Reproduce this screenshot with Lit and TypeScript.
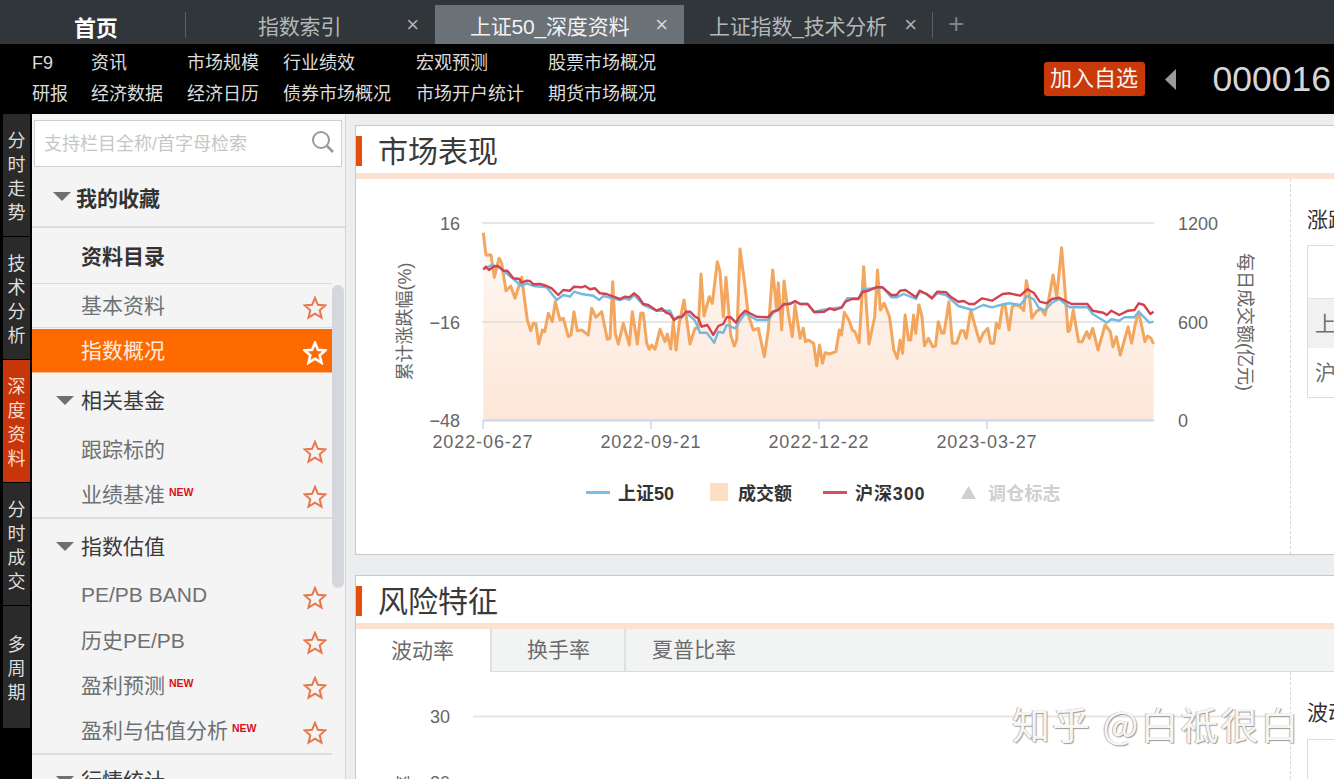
import { LitElement, html, css, svg } from "lit";
import { customElement } from "lit/decorators.js";

// points traced from the crops: [x, y] in crop pixels
const A_X = (x: number) => 380 + x / 3;
const B_X = (x: number) => 780 + x / 2.83;
const Y = (y: number) => 200 + y / 3;

const join = (a: number[][], b: number[][]) => [
  ...a.map(([x, y]) => [A_X(x), Y(y)]),
  ...b.map(([x, y]) => [B_X(x), Y(y)]),
];

const volume = join(
  [[310,98],[318,165],[333,165],[343,232],[357,175],[365,190],[378,272],[392,258],[405,295],[425,232],[442,360],[452,392],[460,370],[468,372],[476,432],[487,390],[494,395],[505,340],[517,365],[526,305],[540,360],[550,355],[565,410],[573,405],[582,335],[592,392],[605,390],[625,405],[635,325],[648,352],[665,335],[682,418],[690,415],[698,245],[706,400],[715,432],[730,370],[748,435],[757,335],[772,432],[782,340],[790,340],[800,430],[808,448],[815,435],[825,448],[840,388],[855,425],[862,402],[872,447],[880,365],[888,450],[898,370],[912,300],[930,432],[945,385],[955,385],[963,222],[972,348],[988,290],[997,310],[1012,185],[1020,215],[1030,350],[1038,232],[1052,405],[1063,438],[1070,420],[1080,147],[1092,235],[1105,345],[1120,390],[1135,385],[1153,470],[1165,390],[1178,210],[1190,330],[1195,248],[1205,390],[1212,243],[1225,340],[1237,410],[1245,315]],
  [[57,415],[66,385],[72,425],[80,420],[95,430],[104,497],[112,435],[120,490],[128,458],[140,462],[158,455],[168,390],[174,405],[182,337],[195,360],[205,390],[212,395],[224,428],[237,200],[252,432],[268,350],[276,210],[284,330],[295,310],[310,350],[322,450],[332,475],[340,420],[347,460],[354,345],[364,420],[370,420],[378,345],[384,400],[393,315],[402,350],[409,437],[420,415],[432,440],[440,438],[448,365],[458,400],[464,400],[478,305],[488,430],[500,430],[512,392],[520,392],[527,415],[540,330],[550,370],[565,425],[575,400],[588,385],[596,430],[605,430],[612,370],[620,385],[630,315],[637,315],[648,390],[657,320],[668,315],[678,318],[690,332],[697,242],[705,280],[713,355],[725,335],[738,325],[750,345],[760,300],[773,225],[783,290],[797,143],[808,290],[815,395],[820,390],[830,330],[845,425],[855,425],[868,395],[875,415],[885,385],[900,450],[920,375],[935,395],[942,440],[952,410],[963,465],[985,380],[995,430],[1005,375],[1015,335],[1033,425],[1040,408],[1050,415],[1057,432]],
);

const hs300 = join(
  [[310,208],[318,200],[327,210],[340,200],[355,198],[370,212],[382,212],[400,235],[418,237],[425,248],[440,242],[450,243],[460,253],[480,252],[500,258],[515,265],[535,285],[550,270],[570,272],[582,260],[605,262],[615,258],[630,268],[645,265],[660,280],[680,282],[700,290],[720,297],[735,290],[748,292],[762,280],[775,290],[790,312],[805,315],[830,332],[845,325],[858,338],[870,342],[882,360],[895,350],[905,352],[918,335],[930,335],[945,350],[955,355],[965,380],[982,375],[1000,405],[1015,378],[1030,372],[1040,352],[1052,352],[1068,368],[1080,348],[1095,332],[1130,350],[1165,352],[1178,335],[1195,330],[1212,312],[1230,312],[1245,303]],
  [[57,312],[78,312],[97,337],[125,335],[140,325],[155,330],[175,322],[185,305],[205,297],[222,297],[235,275],[250,272],[272,262],[290,262],[315,285],[330,285],[340,272],[355,270],[385,292],[395,272],[415,282],[430,295],[445,275],[470,277],[485,292],[505,305],[520,303],[535,312],[550,312],[572,295],[600,302],[630,282],[650,280],[680,287],[700,268],[718,278],[735,305],[755,310],[770,297],[790,293],[825,312],[870,312],[885,332],[915,338],[925,345],[938,332],[960,345],[985,332],[1003,330],[1015,310],[1030,315],[1048,342],[1057,335]],
);

const sz50 = join(
  [[310,208],[335,195],[355,200],[370,212],[400,237],[425,258],[440,250],[460,258],[500,262],[530,300],[550,285],[570,290],[582,275],[605,282],[640,287],[658,300],[670,288],[720,300],[735,295],[748,300],[762,285],[790,315],[830,332],[870,332],[882,358],[905,350],[918,337],[945,362],[960,398],[980,398],[1003,428],[1015,395],[1030,398],[1040,375],[1065,385],[1095,340],[1130,360],[1165,360],[1178,340],[1212,315],[1245,306]],
  [[57,312],[78,312],[97,335],[120,330],[175,322],[190,295],[222,295],[235,268],[270,265],[290,262],[315,292],[330,292],[350,282],[385,297],[395,275],[415,282],[430,295],[445,280],[470,285],[505,318],[545,330],[575,315],[600,322],[630,313],[650,310],[680,315],[700,288],[718,298],[735,328],[750,330],[770,308],[790,297],[820,322],[870,322],[885,342],[925,368],[938,358],[960,362],[975,352],[1003,352],[1015,335],[1045,368],[1057,365]],
);

const line = (pts: number[][]) => pts.map(([x, y]) => `${x.toFixed(1)},${y.toFixed(1)}`).join(" ");
const area = (pts: number[][]) => `${pts[0][0].toFixed(1)},420 ${line(pts)} ${pts[pts.length - 1][0].toFixed(1)},420`;

const star = html`<svg class="star" viewBox="0 0 24 24"><polygon points="12,1.8 14.9,8.8 22.4,9.4 16.7,14.3 18.5,21.7 12,17.7 5.5,21.7 7.3,14.3 1.6,9.4 9.1,8.8"></polygon></svg>`;
const caret = html`<svg class="caret" viewBox="0 0 18 9"><polygon points="0,0 18,0 9,9"></polygon></svg>`;

const railItems = ["分时走势", "技术分析", "深度资料", "分时成交", "多周期"];

const navCols = [
  ["F9", "研报"],
  ["资讯", "经济数据"],
  ["市场规模", "经济日历"],
  ["行业绩效", "债券市场概况"],
  ["宏观预测", "市场开户统计"],
  ["股票市场概况", "期货市场概况"],
];

class AppParts {
  static row(label: string, isNew = false, cls = "") {
    return html`<div class="row ${cls}">
      <span>${label}</span>${isNew ? html`<b class="new">NEW</b>` : ""}${star}
    </div>`;
  }
}

@customElement("app-root")
export class AppRoot extends LitElement {
  static styles = css`
    :host {
      display: block;
      position: relative;
      width: 1334px;
      height: 779px;
      overflow: hidden;
      background: #ecedee;
      font-family: "Liberation Sans", "Noto Sans CJK SC", sans-serif;
      color: #333;
    }
    .tabs {
      display: flex;
      height: 44px;
      background: #31363a;
      color: #b4b6b7;
      font-size: 21px;
      letter-spacing: -0.2px;
    }
    .tab {
      display: flex;
      align-items: center;
      box-sizing: border-box;
      height: 39px;
      margin-top: 5px;
      width: 249px;
      padding-right: 16px;
    }
    .tab.home {
      width: 185px;
      padding-left: 74px;
      font-weight: bold;
      font-size: 22px;
      color: #fff;
      padding-top: 3px;
    }
    .tab.index { padding-left: 72px; }
    .tab.on { padding-left: 35px; background: #6a7177; color: #f2f2f2; }
    .tab.tech { padding-left: 25px; width: 248px; padding-right: 15px; }
    .x { margin-left: auto; font-size: 22px; line-height: 1; color: #aeb0b2; }
    .on .x { color: #d5d6d7; }
    .sep { width: 1px; height: 26px; margin-top: 12px; background: #5c6064; }
    .plus { margin: 10px 0 0 15px; font-size: 28px; font-weight: 300; line-height: 1; color: #7f8386; }

    .nav {
      display: flex;
      align-items: flex-start;
      box-sizing: border-box;
      height: 70px;
      background: #000;
      color: #dcdcdc;
      font-size: 18px;
      padding: 4px 3px 0 32px;
    }
    .nav-grid {
      display: grid;
      grid-template-columns: 59px 96px 96px 133px 132px auto;
      grid-auto-rows: 31px;
      line-height: 31px;
    }
    .nav-side {
      margin-left: auto;
      display: flex;
      align-items: center;
      height: 34px;
      margin-top: 14px;
    }
    .add {
      width: 101px;
      height: 34px;
      line-height: 34px;
      text-align: center;
      background: #c9390a;
      border-radius: 3px;
      color: #f5f5f5;
      font-size: 22px;
    }
    .back { margin-left: 20px; width: 11px; height: 21px; display: block; }
    .back polygon { fill: #9a9a9a; }
    .code { margin-left: 37px; font-size: 35.5px; color: #d6d6d6; line-height: 34px; }

    .body { display: flex; height: 665px; overflow: hidden; }
    .rail {
      box-sizing: border-box;
      width: 32px;
      padding: 0 2px 0 3px;
      background: #000;
      display: flex;
      flex-direction: column;
      gap: 1px;
      flex: none;
    }
    .rail-item {
      box-sizing: border-box;
      height: 122px;
      padding-top: 3px;
      background: #2a2a2a;
      color: #dedede;
      font-size: 18px;
      line-height: 24px;
      display: flex;
      align-items: center;
      justify-content: center;
    }
    .rail-item span { width: 18px; text-align: center; }
    .rail-item.on { background: #c7360a; color: #f7dcd0; }

    .side {
      position: relative;
      box-sizing: border-box;
      flex: none;
      width: 314px;
      border-right: 1px solid #d4d4d4;
      background: #f4f4f5;
      padding-top: 6px;
      overflow: hidden;
    }
    .search {
      box-sizing: border-box;
      display: flex;
      align-items: center;
      width: 308px;
      height: 47px;
      margin-left: 2px;
      padding: 0 6px 4px 9px;
      background: #fff;
      border: 1px solid #cfcfcf;
      color: #c6c6c6;
      font-size: 18px;
    }
    .search svg { margin-left: auto; width: 24px; height: 24px; }
    .fav {
      box-sizing: border-box;
      display: flex;
      align-items: center;
      height: 61px;
      padding-left: 21px;
      border-bottom: 2px solid #dcdcdc;
      font-size: 21px;
      font-weight: bold;
    }
    .fav .caret { margin: 0 5px 0 0; }
    .dir {
      box-sizing: border-box;
      display: flex;
      align-items: center;
      height: 56px;
      padding: 0 0 2px 49px;
      margin-right: 13px;
      border-bottom: 1px solid #dcdcdc;
      font-size: 21px;
      font-weight: bold;
    }
    .caret { width: 18px; height: 9px; flex: none; }
    .caret polygon { fill: #6f6f6f; }
    .row {
      box-sizing: border-box;
      display: flex;
      align-items: center;
      height: 45px;
      padding: 0 5px 4px 49px;
      margin-right: 13px;
      color: #6d7172;
      font-size: 21px;
    }
    .row.basic { height: 44px; border-bottom: 1px solid #dcdcdc; margin-bottom: 1px; }
    .row.active {
      height: 44px;
      background: #ff6a00;
      border-bottom: 1px solid #f9b585;
      color: #fbeee2;
      margin-bottom: 5px;
    }
    .row.plain { padding-bottom: 1px; }
    .star { width: 24px; height: 24px; margin: 9px 0 0 auto; flex: none; }
    .plain .star { margin-top: 6px; }
    .star polygon { fill: none; stroke: #e8784a; stroke-width: 2; }
    .active .star polygon { stroke: #fff; stroke-width: 2.6; }
    .new {
      align-self: flex-start;
      margin: 14px 0 0 4px;
      font-size: 10.5px;
      line-height: 12px;
      color: #d8101c;
    }
    .group {
      box-sizing: border-box;
      display: flex;
      align-items: center;
      height: 45px;
      padding: 0 0 4px 24px;
      margin: 0 13px 4px 0;
      color: #3a3a3a;
      font-size: 21px;
    }
    .group .caret { margin: 4px 7px 0 0; }
    .line { height: 2px; background: #dcdcdc; margin: 0 13px 5px 0; }
    .line.thin { margin-top: 0; margin-bottom: 3px; }
    .thumb {
      position: absolute;
      left: 300px;
      top: 171px;
      width: 12px;
      height: 303px;
      border-radius: 6px;
      background: #d6d7dc;
    }

    .main { flex: none; width: 988px; padding: 11px 0 0 9px; }
    .card {
      box-sizing: border-box;
      width: 990px;
      background: #fff;
      border: 1px solid #c9c9c9;
      border-right: none;
    }
    .card.market { height: 430px; margin-bottom: 20px; }
    .head {
      display: flex;
      align-items: center;
      box-sizing: border-box;
      height: 53px;
      padding-top: 3px;
      border-bottom: 6px solid #fde2d2;
      font-size: 30px;
      color: #3a3a3a;
    }
    .head span { margin-bottom: 4px; }
    .mark { width: 6px; height: 30px; margin-right: 16px; background: #e34e0d; }
    .split { display: flex; }
    .plot {
      box-sizing: border-box;
      flex: none;
      width: 935px;
      border-right: 1px dashed #d6d6d6;
    }
    .market .plot { height: 375px; }
    .plot svg { display: block; }
    .plot text { font-family: "Liberation Sans", "Noto Sans CJK SC", sans-serif; font-size: 18px; fill: #666; }
    .legend {
      display: flex;
      align-items: center;
      height: 22px;
      margin-top: 22px;
      padding-left: 230px;
      font-size: 18px;
      font-weight: bold;
      color: #333;
      white-space: nowrap;
    }
    .dash { width: 24px; height: 3px; margin-right: 8px; }
    .dash.blue { background: #7cbce6; }
    .dash.red { background: #d94f5e; margin-left: 31px; }
    .swatch { width: 18px; height: 18px; margin: 0 10px 0 34px; background: #fddfc6; }
    .tri { width: 15px; height: 13px; margin: 0 12px 0 36px; display: block; }
    .tri polygon { fill: #cfcfcf; }
    .w58 { width: 58px; }
    .w54 { width: 54px; }
    .w70 { width: 70px; letter-spacing: 0.9px; }
    .muted { color: #cfcfcf; letter-spacing: 0.2px; }
    .panel { flex: none; width: 300px; padding-left: 16px; font-size: 21px; color: #333; }
    .panel-title { height: 24px; line-height: 24px; margin-top: 29px; margin-bottom: 13px; white-space: nowrap; }
    .risk .panel-title { margin-top: 29px; margin-bottom: 14px; }
    .table { border: 1px solid #dcdcdc; border-right: none; color: #6d7172; }
    .t-head { height: 52px; border-bottom: 1px solid #e2e2e2; }
    .t-row { height: 49px; line-height: 49px; padding-left: 7px; }
    .t-row.odd { background: #f1f1f1; }
    .subtabs {
      display: flex;
      box-sizing: border-box;
      height: 43px;
      background: #f2f3f3;
      border-bottom: 1px solid #dcdcdc;
      font-size: 21px;
      color: #6b6b6b;
    }
    .subtab {
      box-sizing: border-box;
      display: flex;
      align-items: center;
      height: 42px;
      width: 134px;
      padding: 0 0 4px 35px;
      border-right: 2px solid #e0e0e0;
    }
    .subtab.on { width: 136px; height: 43px; background: #fff; }
    .subtab.last { width: auto; padding-left: 26px; border: none; }
    .mark-water {
      position: absolute;
      left: 1012px;
      top: 696px;
      font-family: "Noto Sans CJK SC", sans-serif;
      font-size: 38px;
      letter-spacing: 2px;
      line-height: 54px;
      white-space: nowrap;
      color: #f6f6f6;
      text-shadow: 1px 1px 1px #9a9a9a, -1px 0 0 #bdbdbd;
    }
  `;

  render() {
    return html`
      <div class="tabs">
        <div class="tab home">首页</div>
        <div class="sep"></div>
        <div class="tab index">指数索引<span class="x">×</span></div>
        <div class="tab on">上证50_深度资料<span class="x">×</span></div>
        <div class="tab tech">上证指数_技术分析<span class="x">×</span></div>
        <div class="sep"></div>
        <div class="plus">+</div>
      </div>
      <div class="nav">
        <div class="nav-grid">
          ${navCols.map((c) => html`<div>${c[0]}</div>`)}
          ${navCols.map((c) => html`<div>${c[1]}</div>`)}
        </div>
        <div class="nav-side">
          <div class="add">加入自选</div>
          <svg class="back" viewBox="0 0 11 21"><polygon points="11,0 11,21 0,10.5"></polygon></svg>
          <div class="code">000016</div>
        </div>
      </div>
      <div class="body">
        <div class="rail">
          ${railItems.map(
            (t, i) => html`<div class="rail-item ${i === 2 ? "on" : ""}"><span>${t}</span></div>`,
          )}
        </div>
        <div class="side">
          <div class="search">
            <span>支持栏目全称/首字母检索</span>
            <svg viewBox="0 0 24 24">
              <circle cx="10" cy="10" r="8" fill="none" stroke="#9a9a9a" stroke-width="2"></circle>
              <line x1="16" y1="16" x2="22" y2="22" stroke="#9a9a9a" stroke-width="2.6"></line>
            </svg>
          </div>
          <div class="fav">${caret}我的收藏</div>
          <div class="dir">资料目录</div>
          ${AppParts.row("基本资料", false, "basic")}
          ${AppParts.row("指数概况", false, "active")}
          <div class="group">${caret}相关基金</div>
          ${AppParts.row("跟踪标的")}
          ${AppParts.row("业绩基准", true)}
          <div class="line"></div>
          <div class="group">${caret}指数估值</div>
          ${AppParts.row("PE/PB BAND", false, "plain")}
          ${AppParts.row("历史PE/PB")}
          ${AppParts.row("盈利预测", true)}
          ${AppParts.row("盈利与估值分析", true)}
          <div class="line thin"></div>
          <div class="group">${caret}行情统计</div>
          <div class="thumb"></div>
        </div>
        <div class="main">
          <div class="card market">
            <div class="head"><i class="mark"></i><span>市场表现</span></div>
            <div class="split">
              <div class="plot">
                ${this.marketChart()}
                <div class="legend">
                  <i class="dash blue"></i><span class="w58">上证50</span>
                  <i class="swatch"></i><span class="w54">成交额</span>
                  <i class="dash red"></i><span class="w70">沪深300</span>
                  <svg class="tri" viewBox="0 0 15 13"><polygon points="7.5,0 15,13 0,13"></polygon></svg>
                  <span class="muted">调仓标志</span>
                </div>
              </div>
              <div class="panel">
                <div class="panel-title">涨跌幅统计</div>
                <div class="table">
                  <div class="t-head"></div>
                  <div class="t-row odd">上证50</div>
                  <div class="t-row">沪深300</div>
                </div>
              </div>
            </div>
          </div>
          <div class="card risk">
            <div class="head"><i class="mark"></i><span>风险特征</span></div>
            <div class="subtabs">
              <div class="subtab on">波动率</div>
              <div class="subtab">换手率</div>
              <div class="subtab last">夏普比率</div>
            </div>
            <div class="split">
              <div class="plot">
                <svg width="934" height="108" viewBox="356 672 934 108">
                  <line x1="473" y1="716.5" x2="1290" y2="716.5" stroke="#e6e6e6" stroke-width="2"></line>
                  <text x="450" y="723" text-anchor="end">30</text>
                  <text x="450" y="789" text-anchor="end">20</text>
                  <text transform="translate(411 775) rotate(-90)" text-anchor="end">波动率</text>
                </svg>
              </div>
              <div class="panel">
                <div class="panel-title">波动率统计</div>
                <div class="table"><div class="t-head"></div></div>
              </div>
            </div>
          </div>
        </div>
      </div>
      <div class="mark-water">知乎 @白祗很白</div>
    `;
  }

  marketChart() {
    const ticks = [
      [483, "2022-06-27"],
      [651, "2022-09-21"],
      [819, "2022-12-22"],
      [987, "2023-03-27"],
    ] as [number, string][];
    return svg`<svg width="934" height="280" viewBox="356 179 934 280">
      <defs>
        <linearGradient id="vol" x1="0" y1="0" x2="0" y2="1">
          <stop offset="0" stop-color="#fbd6bd" stop-opacity="0.15"></stop>
          <stop offset="1" stop-color="#fbd6bd" stop-opacity="0.6"></stop>
        </linearGradient>
      </defs>
      <line x1="482" y1="223" x2="1154" y2="223" stroke="#e6e6e6" stroke-width="2"></line>
      <line x1="482" y1="322" x2="1154" y2="322" stroke="#e6e6e6" stroke-width="2"></line>
      <polygon points="${area(volume)}" fill="url(#vol)"></polygon>
      <line x1="483" y1="420.5" x2="1154" y2="420.5" stroke="#ccd6eb" stroke-width="2"></line>
      ${ticks.map(([x]) => svg`<line x1="${x}" y1="420" x2="${x}" y2="429" stroke="#ccd6eb" stroke-width="1.5"></line>`)}
      <polyline points="${line(volume)}" fill="none" stroke="#f3a65e" stroke-width="3" stroke-linejoin="round"></polyline>
      <polyline points="${line(sz50)}" fill="none" stroke="#74b9e0" stroke-width="2.4" stroke-linejoin="round"></polyline>
      <polyline points="${line(hs300)}" fill="none" stroke="#d2424f" stroke-width="2.4" stroke-linejoin="round"></polyline>
      <text x="460" y="230" text-anchor="end">16</text>
      <text x="460" y="329" text-anchor="end">−16</text>
      <text x="460" y="427" text-anchor="end">−48</text>
      <text x="1178" y="230">1200</text>
      <text x="1178" y="329">600</text>
      <text x="1178" y="427">0</text>
      ${ticks.map(([x, d]) => svg`<text x="${x}" y="448" text-anchor="middle" letter-spacing="0.9">${d}</text>`)}
      <text transform="translate(411 321.5) rotate(-90)" text-anchor="middle">累计涨跌幅(%)</text>
      <text transform="translate(1239 322) rotate(90)" text-anchor="middle">每日成交额(亿元)</text>
    </svg>`;
  }
}
